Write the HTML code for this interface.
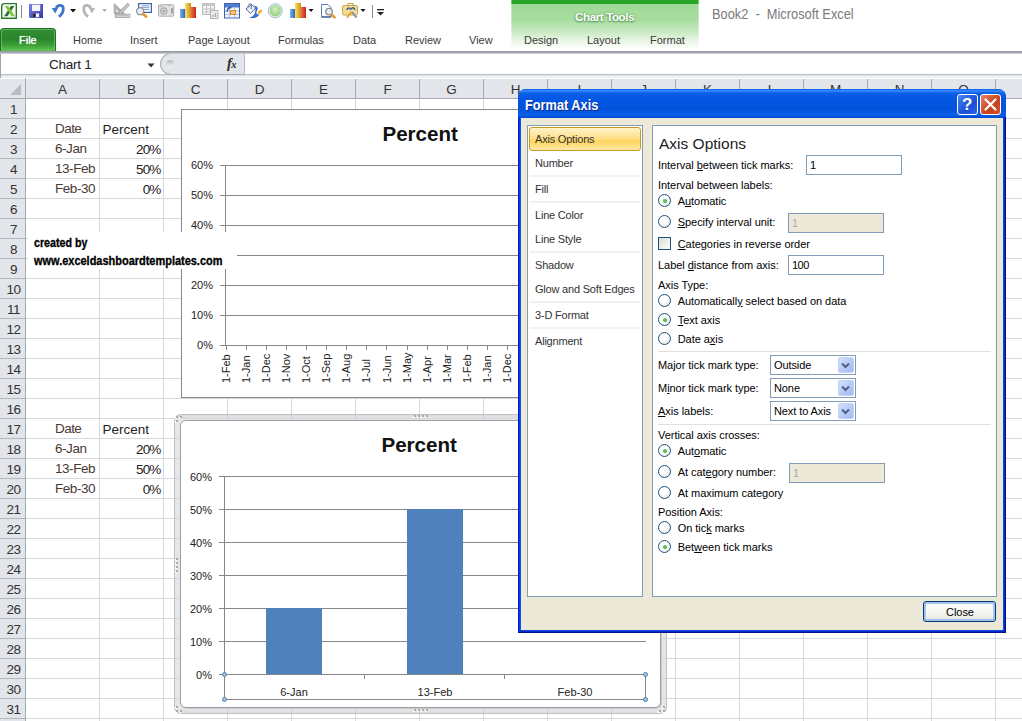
<!DOCTYPE html>
<html><head><meta charset="utf-8"><title>Excel</title>
<style>
*{box-sizing:border-box;margin:0;padding:0}
html,body{width:1022px;height:721px;overflow:hidden;background:#fff}
body{position:relative;font-family:"Liberation Sans",sans-serif;color:#000}
.abs{position:absolute}
.t{position:absolute;white-space:nowrap;line-height:1}
.tab{position:absolute;top:33px;font-size:11px;color:#3b3b3b;white-space:nowrap;line-height:14px}
.ch{position:absolute;top:79px;height:19px;font-size:13.5px;color:#333;text-align:center;line-height:22px}
.rh{position:absolute;left:1px;width:25px;height:20px;font-size:13.5px;color:#333;text-align:center;line-height:21px;letter-spacing:-0.6px}
.cell{position:absolute;font-size:13.5px;color:#222;white-space:nowrap;line-height:22px;height:20px}
.yl{position:absolute;font-size:11px;color:#222;text-align:right;width:30px;line-height:12px;white-space:nowrap}
.xl{position:absolute;font-size:11px;color:#222;white-space:nowrap;line-height:12px;transform-origin:0 0;transform:rotate(-90deg)}
.dl{position:absolute;font-size:11px;color:#000;white-space:nowrap;line-height:13px;letter-spacing:-0.04px}
.li{position:absolute;left:535px;font-size:11px;color:#333;white-space:nowrap;line-height:13px;letter-spacing:-0.2px;margin-top:1px}
.radio{position:absolute;width:13px;height:13px;border-radius:50%;border:1px solid #1c5180;background:radial-gradient(circle at 35% 35%,#fff 40%,#dcdcd4 100%)}
.radio.on::after{content:"";position:absolute;left:3.500px;top:3.500px;width:4px;height:4px;border-radius:50%;background:radial-gradient(circle at 40% 40%,#6fd05f,#1e9a1e)}
.inp{position:absolute;height:20px;border:1px solid #7f9db9;background:#fff;font-size:11px;line-height:19px;padding-left:3px;letter-spacing:-0.5px}
.inp.dis{background:#ece9d8;color:#aca899}
  .sel{position:absolute;height:20px;border:1px solid #7f9db9;background:#fff;font-size:11px;line-height:18px;padding-left:3px;white-space:nowrap;letter-spacing:-0.1px}
.sel i{position:absolute;right:1px;top:1px;width:16px;height:16px;border-radius:2px;background:linear-gradient(135deg,#d4e0fb,#b4c8f6 60%,#a4bbf0);border:1px solid #c2d2f5}
u{text-decoration:underline;text-underline-offset:1px}
</style></head><body>

<div class="abs" style="left:0;top:0;width:1022px;height:51px;background:#fff"></div>
<div class="abs" style="left:511px;top:0;width:188px;height:51px;background:linear-gradient(#27a527 0,#27a527 4px,#9fd996 4px,#a8dda0 20px,#c9eac3 32px,#edf8ea 42px,#fff 50px);box-shadow:inset 1px 0 0 rgba(255,255,255,.35),inset -1px 0 0 rgba(255,255,255,.35)"></div>
<div class="t" style="left:575px;top:12px;font-size:11.5px;color:#fff;font-weight:bold;text-shadow:0 1px 2px #4a8a46,0 0 2px #5a9a56;letter-spacing:-0.35px">Chart Tools</div>
<div class="t" style="left:712px;top:7px;font-size:14px;color:#7a7a7a;transform-origin:0 0;transform:scaleX(0.915)">Book2&nbsp; -&nbsp; Microsoft Excel</div>
<svg class="abs" style="left:0;top:0" width="400" height="28" viewBox="0 0 400 28">
<defs>
<linearGradient id="gb" x1="0" y1="0" x2="1" y2="0"><stop offset="0" stop-color="#7fb2ee"/><stop offset="1" stop-color="#1f5fc0"/></linearGradient>
<linearGradient id="gy" x1="0" y1="0" x2="1" y2="0"><stop offset="0" stop-color="#ffe070"/><stop offset="1" stop-color="#c99400"/></linearGradient>
<linearGradient id="gr" x1="0" y1="0" x2="1" y2="0"><stop offset="0" stop-color="#f4745a"/><stop offset="1" stop-color="#c2250f"/></linearGradient>
<radialGradient id="gg" cx="0.5" cy="0.4" r="0.6"><stop offset="0" stop-color="#d6f0c0"/><stop offset="1" stop-color="#8fd07a"/></radialGradient>
<linearGradient id="gs" x1="0" y1="0" x2="1" y2="1"><stop offset="0" stop-color="#8080ea"/><stop offset="1" stop-color="#3636a4"/></linearGradient>
</defs>
<!-- excel icon -->
<path d="M1.700 18.300V6.200Q1.700 3.600 4.500 3.600H16.300V18.300z" fill="#fff" stroke="#2a7a32" stroke-width="1.400"/>
<rect x="3" y="5" width="12" height="12" fill="#e4f2dc" opacity=".45"/>
<path d="M11 5.900h3.300L7.400 16.200H4.100z" fill="#1f6f3a"/>
<path d="M4.800 5.900h3.300L15 16.200h-3.300z" fill="#86c440"/>
<!-- sep -->
<rect x="21" y="5" width="1" height="13" fill="#8a8a8a"/>
<!-- save -->
<path d="M29 4h14v14h-13l-1-1z" fill="url(#gs)"/>
<rect x="32" y="4.700" width="8.200" height="6.300" fill="#f4f6fc"/>
<rect x="33.100" y="13.400" width="6" height="3.800" fill="#f2f2f6"/>
<rect x="33.100" y="13.400" width="2.600" height="3.800" fill="#1a1a2a"/>
<!-- undo -->
<path d="M56 7.500C58.500 4.200 63.800 4.600 63.300 9.500C63 12.500 61.300 15 58.800 16.600" fill="none" stroke="#3b74cf" stroke-width="2.700"/>
<path d="M51.800 8.200l6.800-1.200l-3.300 6.600z" fill="#3b74cf"/>
<path d="M70 9h6l-3 3.500z" fill="#111"/>
<!-- redo -->
<path d="M91 7.500C88.500 4.200 83.200 4.600 83.700 9.500C84 12.500 85.700 15 88.200 16.600" fill="none" stroke="#b4b6ba" stroke-width="2.700"/>
<path d="M95.200 8.200l-6.800-1.200l3.300 6.600z" fill="#b4b6ba"/>
<path d="M102 9h5l-2.500 3z" fill="#b0b0b0"/>
<!-- ruler triangle -->
<path d="M114.200 3.600V13.400H124.400z" fill="#b4b4b4" stroke="#a2a2a2" stroke-width=".8"/>
<path d="M116 9.300v2.400h2.500z" fill="#fff"/>
<path d="M120.300 12.700L128.800 3.900" stroke="#9c9c9c" stroke-width="3.200"/>
<path d="M120.300 12.700L128.800 3.900" stroke="#cdcdcd" stroke-width="1.600"/>
<rect x="115.200" y="14.200" width="14.600" height="3.200" fill="#d2d2d2" stroke="#a0a0a0" stroke-width=".8"/>
<path d="M117 14.500v1.500M119 14.500v1.500M121 14.500v1.500M123 14.500v1.500M125 14.500v1.500M127 14.500v1.500" stroke="#9a9a9a" stroke-width=".6"/>
<!-- find doc -->
<rect x="138.600" y="3.600" width="12.800" height="8.800" fill="#fff" stroke="#3f64a6" stroke-width="1.200"/>
<path d="M141.500 5.800h8M141.500 7.700h8M143.500 9.600h6" stroke="#7f9cd0" stroke-width="1"/>
<circle cx="140.200" cy="11.200" r="3.500" fill="#e4eefa" stroke="#8a8f98" stroke-width="1.300"/>
<path d="M143.200 14.100l2.800 2.400" stroke="#e39a2c" stroke-width="2.800" stroke-linecap="round"/>
<!-- camera -->
<rect x="158.500" y="4.800" width="15.300" height="11.400" rx="1.200" fill="#e2e2e2" stroke="#b0b0b0"/>
<rect x="159.500" y="5.600" width="3" height="1.400" fill="#bdbdbd"/>
<circle cx="163.800" cy="11" r="3.300" fill="#d2d2d2" stroke="#a2a2a2" stroke-width="1"/>
<circle cx="163.800" cy="11" r="1.300" fill="#ababab"/>
<path d="M168.300 6l1.200-1" stroke="#8a8a8a" stroke-width="1"/>
<rect x="171.200" y="8.200" width="1.600" height="5.200" fill="#8e8e8e"/>
<!-- bar chart -->
<rect x="180" y="9" width="5.500" height="9" fill="url(#gb)"/>
<rect x="185" y="3" width="6" height="15" fill="url(#gy)"/>
<rect x="190.500" y="7" width="5.500" height="11" fill="url(#gr)"/>
<!-- gray table -->
<rect x="202.500" y="3.500" width="12" height="11" fill="#f3f3f3" stroke="#bcbcbc"/>
<rect x="202.500" y="3.500" width="12" height="2.500" fill="#c8c8c8"/>
<path d="M202.500 9h12M202.500 12h12M206.500 6v8.500M210.500 6v8.500" stroke="#c4c4c4" stroke-width="1"/>
<rect x="210.500" y="10.500" width="7.500" height="8" fill="#ededed" stroke="#b4b4b4"/>
<path d="M213 17v-2M215.500 17v-4" stroke="#a8a8a8" stroke-width="1.400"/>
<!-- blue table -->
<rect x="224.500" y="3.500" width="15" height="14.500" fill="#f4f8fd" stroke="#3c62a8"/>
<rect x="225" y="4" width="14" height="3.500" fill="#4f7fd0"/>
<path d="M225 11h14M225 14.500h14M229.500 7.500v10.500M234.500 7.500v10.500" stroke="#a9c0e6" stroke-width="1"/>
<rect x="230.500" y="10.500" width="5" height="4" fill="#f9c48a" stroke="#e08a2a"/>
<path d="M227 12c0-3 2-4.500 4.500-4.500" stroke="#2a54a8" stroke-width="1.300" fill="none"/>
<!-- paint bucket -->
<path d="M254.500 5.800C258 6 258.600 9 256.600 11.500C255.600 13 257 14.500 259.500 14.600C258 17.600 253 19.200 249 17.400C252 17.500 254.300 15.500 254.800 13C255.300 10.500 256 8 254.500 5.800z" fill="#3a6fd0"/>
<path d="M246 8.900L251.400 4.500L255.600 8L250.500 13.600z" fill="#eef3fb" stroke="#3a5a9a" stroke-width="0.900"/>
<path d="M248.100 7C248 4 250 2.800 252.100 4.700" stroke="#4a6aa8" fill="none" stroke-width="0.900"/>
<path d="M251.200 4.500v4.500" stroke="#6a7a95" stroke-width="1.200"/>
<path d="M258.300 13.300L261.700 10.100" stroke="#f0b020" stroke-width="2.400"/>
<!-- green circle -->
<circle cx="275.300" cy="10.800" r="7" fill="#eef2f7" stroke="#a5b8d4" stroke-width="1"/>
<circle cx="275.300" cy="10.800" r="5.700" fill="url(#gg)"/>
<!-- bar chart 2 -->
<rect x="290" y="9" width="5.500" height="9" fill="url(#gb)"/>
<rect x="295" y="3" width="6" height="15" fill="url(#gy)"/>
<rect x="300.500" y="7" width="5.500" height="11" fill="url(#gr)"/>
<path d="M308.500 9h5l-2.500 3z" fill="#111"/>
<!-- print preview -->
<path d="M321.500 4.500h6.500l3 3v9.500h-9.500z" fill="#fff" stroke="#5a7fb8"/>
<path d="M321.500 17h9.500" stroke="#3a5f9a" stroke-width="1.200"/>
<circle cx="329" cy="11.600" r="3.300" fill="#e4edf8" stroke="#8a8f98" stroke-width="1.300"/>
<path d="M331.800 14.800l2.800 2.600" stroke="#e39a2c" stroke-width="2.600" stroke-linecap="round"/>
<!-- toolbox -->
<rect x="342.500" y="5.500" width="15" height="9.500" rx="1.500" fill="#f6dc94" stroke="#c9a54a"/>
<path d="M348 5.500v-2h5v2" fill="none" stroke="#c9a54a" stroke-width="1.200"/>
<path d="M346.800 10c.8-2.600 3-2.600 3.600-.200M351.200 9.600c.8-2.400 3-2.400 3.800.400" stroke="#3d5f9a" stroke-width="1.500" fill="none"/>
<path d="M351.400 12L347 17.800" stroke="#e0a828" stroke-width="1.800"/>
<path d="M351.800 11.800L356.600 17.600" stroke="#8596b3" stroke-width="2"/>
<path d="M360.500 9h5l-2.500 3z" fill="#111"/>
<!-- sep -->
<rect x="372" y="5" width="1" height="13" fill="#8a8a8a"/>
<!-- customize -->
<rect x="377" y="9" width="7" height="1.300" fill="#222"/>
<path d="M377 12h7l-3.500 3.500z" fill="#222"/>
</svg>

<div class="abs" style="left:0;top:28px;width:56px;height:23px;border-radius:4px 4px 0 0;background:linear-gradient(#318f31,#2a842c 45%,#3a9f36 72%,#62c455);box-shadow:inset 1px 1px 0 rgba(140,210,130,.55),inset -1px 0 0 rgba(140,210,130,.55);border:1px solid #1f6e23;border-bottom:none"></div>
<div class="tab" style="left:19px;color:#fff;font-weight:normal;text-shadow:0 0 1px #fff">File</div>
<div class="tab" style="left:73px">Home</div>
<div class="tab" style="left:130px">Insert</div>
<div class="tab" style="left:188px">Page Layout</div>
<div class="tab" style="left:278px">Formulas</div>
<div class="tab" style="left:353px">Data</div>
<div class="tab" style="left:405px">Review</div>
<div class="tab" style="left:469px">View</div>
<div class="tab" style="left:524px">Design</div>
<div class="tab" style="left:587px">Layout</div>
<div class="tab" style="left:650px">Format</div>
<div class="abs" style="left:0;top:54px;width:1022px;height:25px;background:#fff"></div>
<div class="abs" style="left:0;top:74px;width:1022px;height:1px;background:#b9bdc4"></div>
<div class="abs" style="left:0;top:75px;width:1022px;height:3px;background:linear-gradient(#d5d8de,#eef0f8 40%,#eef0f8)"></div>
<div class="abs" style="left:0;top:78px;width:1022px;height:1px;background:#b3b7be"></div>
<div class="abs" style="left:0;top:54px;width:1px;height:25px;background:#a0a4ab"></div>
<div class="t" style="left:49px;top:58px;font-size:13.5px;color:#222;letter-spacing:-0.25px">Chart 1</div>
<svg class="abs" style="left:146.700px;top:62.600px" width="9" height="6"><path d="M0.5 0.5h7l-3.5 4z" fill="#333"/></svg>
<div class="abs" style="left:160px;top:53px;width:85px;height:22px;border-radius:11px 0 0 11px;background:#e2e5ea;border:1px solid #a9adb4;border-right:1px solid #b4b8bf"></div>
<div class="abs" style="left:166px;top:60px;width:8px;height:8px;border-radius:50%;background:linear-gradient(#b4b8be,#dfe2e6 60%,#eceef1)"></div>
<div class="t" style="left:227px;top:56px;font-family:'Liberation Serif',serif;font-style:italic;font-weight:bold;font-size:14.500px;color:#2a2a2a">f<span style="font-size:10.500px;margin-left:-0.500px">x</span></div>
<div class="abs" style="left:0;top:51px;width:1022px;height:3px;background:linear-gradient(#8d9197,#a9adb3 50%,#d5d8dc)"></div>
<div class="abs" style="left:0;top:78px;width:1022px;height:643px;background:#fff"></div>
<div class="abs" style="left:0;top:79px;width:1022px;height:19px;background:#e2e5ea"></div>
<div class="abs" style="left:0;top:98px;width:1022px;height:1px;background:#a5a9b0"></div>
<div class="abs" style="left:0;top:99px;width:25px;height:622px;background:#e2e5ea"></div>
<div class="abs" style="left:25px;top:78px;width:1px;height:643px;background:#a5a9b0"></div>
<svg class="abs" style="left:10px;top:84px" width="12" height="12"><path d="M11 0v11h-11z" fill="#b9bdc2"/></svg>
<div class="ch" style="left:26px;width:73px">A</div>
<div class="abs" style="left:99px;top:79px;width:1px;height:19px;background:#a5a9b0"></div>
<div class="abs" style="left:99px;top:99px;width:1px;height:622px;background:#d6d9dc"></div>
<div class="ch" style="left:100px;width:63px">B</div>
<div class="abs" style="left:163px;top:79px;width:1px;height:19px;background:#a5a9b0"></div>
<div class="abs" style="left:163px;top:99px;width:1px;height:622px;background:#d6d9dc"></div>
<div class="ch" style="left:164px;width:63px">C</div>
<div class="abs" style="left:227px;top:79px;width:1px;height:19px;background:#a5a9b0"></div>
<div class="abs" style="left:227px;top:99px;width:1px;height:622px;background:#d6d9dc"></div>
<div class="ch" style="left:228px;width:63px">D</div>
<div class="abs" style="left:291px;top:79px;width:1px;height:19px;background:#a5a9b0"></div>
<div class="abs" style="left:291px;top:99px;width:1px;height:622px;background:#d6d9dc"></div>
<div class="ch" style="left:292px;width:63px">E</div>
<div class="abs" style="left:355px;top:79px;width:1px;height:19px;background:#a5a9b0"></div>
<div class="abs" style="left:355px;top:99px;width:1px;height:622px;background:#d6d9dc"></div>
<div class="ch" style="left:356px;width:63px">F</div>
<div class="abs" style="left:419px;top:79px;width:1px;height:19px;background:#a5a9b0"></div>
<div class="abs" style="left:419px;top:99px;width:1px;height:622px;background:#d6d9dc"></div>
<div class="ch" style="left:420px;width:63px">G</div>
<div class="abs" style="left:483px;top:79px;width:1px;height:19px;background:#a5a9b0"></div>
<div class="abs" style="left:483px;top:99px;width:1px;height:622px;background:#d6d9dc"></div>
<div class="ch" style="left:484px;width:63px">H</div>
<div class="abs" style="left:547px;top:79px;width:1px;height:19px;background:#a5a9b0"></div>
<div class="abs" style="left:547px;top:99px;width:1px;height:622px;background:#d6d9dc"></div>
<div class="ch" style="left:548px;width:63px">I</div>
<div class="abs" style="left:611px;top:79px;width:1px;height:19px;background:#a5a9b0"></div>
<div class="abs" style="left:611px;top:99px;width:1px;height:622px;background:#d6d9dc"></div>
<div class="ch" style="left:612px;width:63px">J</div>
<div class="abs" style="left:675px;top:79px;width:1px;height:19px;background:#a5a9b0"></div>
<div class="abs" style="left:675px;top:99px;width:1px;height:622px;background:#d6d9dc"></div>
<div class="ch" style="left:676px;width:63px">K</div>
<div class="abs" style="left:739px;top:79px;width:1px;height:19px;background:#a5a9b0"></div>
<div class="abs" style="left:739px;top:99px;width:1px;height:622px;background:#d6d9dc"></div>
<div class="ch" style="left:740px;width:63px">L</div>
<div class="abs" style="left:803px;top:79px;width:1px;height:19px;background:#a5a9b0"></div>
<div class="abs" style="left:803px;top:99px;width:1px;height:622px;background:#d6d9dc"></div>
<div class="ch" style="left:804px;width:63px">M</div>
<div class="abs" style="left:867px;top:79px;width:1px;height:19px;background:#a5a9b0"></div>
<div class="abs" style="left:867px;top:99px;width:1px;height:622px;background:#d6d9dc"></div>
<div class="ch" style="left:868px;width:63px">N</div>
<div class="abs" style="left:931px;top:79px;width:1px;height:19px;background:#a5a9b0"></div>
<div class="abs" style="left:931px;top:99px;width:1px;height:622px;background:#d6d9dc"></div>
<div class="ch" style="left:932px;width:63px">O</div>
<div class="abs" style="left:995px;top:79px;width:1px;height:19px;background:#a5a9b0"></div>
<div class="abs" style="left:995px;top:99px;width:1px;height:622px;background:#d6d9dc"></div>
<div class="ch" style="left:996px;width:64px">P</div>
<div class="rh" style="top:99px">1</div>
<div class="abs" style="left:26px;top:118px;width:996px;height:1px;background:#d6d9dc"></div>
<div class="abs" style="left:0;top:118px;width:25px;height:1px;background:#b4b8be"></div>
<div class="rh" style="top:119px">2</div>
<div class="abs" style="left:26px;top:138px;width:996px;height:1px;background:#d6d9dc"></div>
<div class="abs" style="left:0;top:138px;width:25px;height:1px;background:#b4b8be"></div>
<div class="rh" style="top:139px">3</div>
<div class="abs" style="left:26px;top:158px;width:996px;height:1px;background:#d6d9dc"></div>
<div class="abs" style="left:0;top:158px;width:25px;height:1px;background:#b4b8be"></div>
<div class="rh" style="top:159px">4</div>
<div class="abs" style="left:26px;top:178px;width:996px;height:1px;background:#d6d9dc"></div>
<div class="abs" style="left:0;top:178px;width:25px;height:1px;background:#b4b8be"></div>
<div class="rh" style="top:179px">5</div>
<div class="abs" style="left:26px;top:198px;width:996px;height:1px;background:#d6d9dc"></div>
<div class="abs" style="left:0;top:198px;width:25px;height:1px;background:#b4b8be"></div>
<div class="rh" style="top:199px">6</div>
<div class="abs" style="left:26px;top:218px;width:996px;height:1px;background:#d6d9dc"></div>
<div class="abs" style="left:0;top:218px;width:25px;height:1px;background:#b4b8be"></div>
<div class="rh" style="top:219px">7</div>
<div class="abs" style="left:26px;top:238px;width:996px;height:1px;background:#d6d9dc"></div>
<div class="abs" style="left:0;top:238px;width:25px;height:1px;background:#b4b8be"></div>
<div class="rh" style="top:239px">8</div>
<div class="abs" style="left:26px;top:258px;width:996px;height:1px;background:#d6d9dc"></div>
<div class="abs" style="left:0;top:258px;width:25px;height:1px;background:#b4b8be"></div>
<div class="rh" style="top:259px">9</div>
<div class="abs" style="left:26px;top:278px;width:996px;height:1px;background:#d6d9dc"></div>
<div class="abs" style="left:0;top:278px;width:25px;height:1px;background:#b4b8be"></div>
<div class="rh" style="top:279px">10</div>
<div class="abs" style="left:26px;top:298px;width:996px;height:1px;background:#d6d9dc"></div>
<div class="abs" style="left:0;top:298px;width:25px;height:1px;background:#b4b8be"></div>
<div class="rh" style="top:299px">11</div>
<div class="abs" style="left:26px;top:318px;width:996px;height:1px;background:#d6d9dc"></div>
<div class="abs" style="left:0;top:318px;width:25px;height:1px;background:#b4b8be"></div>
<div class="rh" style="top:319px">12</div>
<div class="abs" style="left:26px;top:338px;width:996px;height:1px;background:#d6d9dc"></div>
<div class="abs" style="left:0;top:338px;width:25px;height:1px;background:#b4b8be"></div>
<div class="rh" style="top:339px">13</div>
<div class="abs" style="left:26px;top:358px;width:996px;height:1px;background:#d6d9dc"></div>
<div class="abs" style="left:0;top:358px;width:25px;height:1px;background:#b4b8be"></div>
<div class="rh" style="top:359px">14</div>
<div class="abs" style="left:26px;top:378px;width:996px;height:1px;background:#d6d9dc"></div>
<div class="abs" style="left:0;top:378px;width:25px;height:1px;background:#b4b8be"></div>
<div class="rh" style="top:379px">15</div>
<div class="abs" style="left:26px;top:398px;width:996px;height:1px;background:#d6d9dc"></div>
<div class="abs" style="left:0;top:398px;width:25px;height:1px;background:#b4b8be"></div>
<div class="rh" style="top:399px">16</div>
<div class="abs" style="left:26px;top:418px;width:996px;height:1px;background:#d6d9dc"></div>
<div class="abs" style="left:0;top:418px;width:25px;height:1px;background:#b4b8be"></div>
<div class="rh" style="top:419px">17</div>
<div class="abs" style="left:26px;top:438px;width:996px;height:1px;background:#d6d9dc"></div>
<div class="abs" style="left:0;top:438px;width:25px;height:1px;background:#b4b8be"></div>
<div class="rh" style="top:439px">18</div>
<div class="abs" style="left:26px;top:458px;width:996px;height:1px;background:#d6d9dc"></div>
<div class="abs" style="left:0;top:458px;width:25px;height:1px;background:#b4b8be"></div>
<div class="rh" style="top:459px">19</div>
<div class="abs" style="left:26px;top:478px;width:996px;height:1px;background:#d6d9dc"></div>
<div class="abs" style="left:0;top:478px;width:25px;height:1px;background:#b4b8be"></div>
<div class="rh" style="top:479px">20</div>
<div class="abs" style="left:26px;top:498px;width:996px;height:1px;background:#d6d9dc"></div>
<div class="abs" style="left:0;top:498px;width:25px;height:1px;background:#b4b8be"></div>
<div class="rh" style="top:499px">21</div>
<div class="abs" style="left:26px;top:518px;width:996px;height:1px;background:#d6d9dc"></div>
<div class="abs" style="left:0;top:518px;width:25px;height:1px;background:#b4b8be"></div>
<div class="rh" style="top:519px">22</div>
<div class="abs" style="left:26px;top:538px;width:996px;height:1px;background:#d6d9dc"></div>
<div class="abs" style="left:0;top:538px;width:25px;height:1px;background:#b4b8be"></div>
<div class="rh" style="top:539px">23</div>
<div class="abs" style="left:26px;top:558px;width:996px;height:1px;background:#d6d9dc"></div>
<div class="abs" style="left:0;top:558px;width:25px;height:1px;background:#b4b8be"></div>
<div class="rh" style="top:559px">24</div>
<div class="abs" style="left:26px;top:578px;width:996px;height:1px;background:#d6d9dc"></div>
<div class="abs" style="left:0;top:578px;width:25px;height:1px;background:#b4b8be"></div>
<div class="rh" style="top:579px">25</div>
<div class="abs" style="left:26px;top:598px;width:996px;height:1px;background:#d6d9dc"></div>
<div class="abs" style="left:0;top:598px;width:25px;height:1px;background:#b4b8be"></div>
<div class="rh" style="top:599px">26</div>
<div class="abs" style="left:26px;top:618px;width:996px;height:1px;background:#d6d9dc"></div>
<div class="abs" style="left:0;top:618px;width:25px;height:1px;background:#b4b8be"></div>
<div class="rh" style="top:619px">27</div>
<div class="abs" style="left:26px;top:638px;width:996px;height:1px;background:#d6d9dc"></div>
<div class="abs" style="left:0;top:638px;width:25px;height:1px;background:#b4b8be"></div>
<div class="rh" style="top:639px">28</div>
<div class="abs" style="left:26px;top:658px;width:996px;height:1px;background:#d6d9dc"></div>
<div class="abs" style="left:0;top:658px;width:25px;height:1px;background:#b4b8be"></div>
<div class="rh" style="top:659px">29</div>
<div class="abs" style="left:26px;top:678px;width:996px;height:1px;background:#d6d9dc"></div>
<div class="abs" style="left:0;top:678px;width:25px;height:1px;background:#b4b8be"></div>
<div class="rh" style="top:679px">30</div>
<div class="abs" style="left:26px;top:698px;width:996px;height:1px;background:#d6d9dc"></div>
<div class="abs" style="left:0;top:698px;width:25px;height:1px;background:#b4b8be"></div>
<div class="rh" style="top:699px">31</div>
<div class="abs" style="left:26px;top:718px;width:996px;height:1px;background:#d6d9dc"></div>
<div class="abs" style="left:0;top:718px;width:25px;height:1px;background:#b4b8be"></div>
<div class="rh" style="top:719px">32</div>
<div class="cell" style="left:55px;top:119px;color:#4a3a33;letter-spacing:-0.55px;line-height:20.500px">Date</div>
<div class="cell" style="left:102.5px;top:119px">Percent</div>
<div class="cell" style="left:55px;top:139px;color:#4a3a33;letter-spacing:-0.45px;line-height:20.500px">6-Jan</div>
<div class="cell" style="left:100px;width:60.5px;text-align:right;top:139px;letter-spacing:-0.85px;line-height:21px">20%</div>
<div class="cell" style="left:55px;top:159px;color:#4a3a33;letter-spacing:-0.45px;line-height:20.500px">13-Feb</div>
<div class="cell" style="left:100px;width:60.5px;text-align:right;top:159px;letter-spacing:-0.85px;line-height:21px">50%</div>
<div class="cell" style="left:55px;top:179px;color:#4a3a33;letter-spacing:-0.45px;line-height:20.500px">Feb-30</div>
<div class="cell" style="left:100px;width:60.5px;text-align:right;top:179px;letter-spacing:-0.85px;line-height:21px">0%</div>
<div class="cell" style="left:55px;top:419px;color:#4a3a33;letter-spacing:-0.55px;line-height:20.500px">Date</div>
<div class="cell" style="left:102.5px;top:419px">Percent</div>
<div class="cell" style="left:55px;top:439px;color:#4a3a33;letter-spacing:-0.45px;line-height:20.500px">6-Jan</div>
<div class="cell" style="left:100px;width:60.5px;text-align:right;top:439px;letter-spacing:-0.85px;line-height:21px">20%</div>
<div class="cell" style="left:55px;top:459px;color:#4a3a33;letter-spacing:-0.45px;line-height:20.500px">13-Feb</div>
<div class="cell" style="left:100px;width:60.5px;text-align:right;top:459px;letter-spacing:-0.85px;line-height:21px">50%</div>
<div class="cell" style="left:55px;top:479px;color:#4a3a33;letter-spacing:-0.45px;line-height:20.500px">Feb-30</div>
<div class="cell" style="left:100px;width:60.5px;text-align:right;top:479px;letter-spacing:-0.85px;line-height:21px">0%</div>
<div class="abs" style="left:181px;top:109px;width:420px;height:289px;background:#fff;border:1px solid #8a8a8a"></div>
<div class="t" style="left:382.4px;top:124.4px;font-size:20.6px;font-weight:bold;color:#111">Percent</div>
<div class="abs" style="left:220px;top:165px;width:400px;height:1px;background:#868686"></div>
<div class="yl" style="left:183px;top:159px">60%</div>
<div class="abs" style="left:220px;top:195px;width:400px;height:1px;background:#868686"></div>
<div class="yl" style="left:183px;top:189px">50%</div>
<div class="abs" style="left:220px;top:225px;width:400px;height:1px;background:#868686"></div>
<div class="yl" style="left:183px;top:219px">40%</div>
<div class="abs" style="left:220px;top:255px;width:400px;height:1px;background:#868686"></div>
<div class="yl" style="left:183px;top:249px">30%</div>
<div class="abs" style="left:220px;top:285px;width:400px;height:1px;background:#868686"></div>
<div class="yl" style="left:183px;top:279px">20%</div>
<div class="abs" style="left:220px;top:315px;width:400px;height:1px;background:#868686"></div>
<div class="yl" style="left:183px;top:309px">10%</div>
<div class="abs" style="left:220px;top:345px;width:400px;height:1px;background:#868686"></div>
<div class="yl" style="left:183px;top:339px">0%</div>
<div class="abs" style="left:225px;top:165px;width:1px;height:181px;background:#868686"></div>
<div class="abs" style="left:226px;top:345px;width:1px;height:5px;background:#868686"></div>
<div class="xl" style="left:219.5px;top:383px">1-Feb</div>
<div class="abs" style="left:246px;top:345px;width:1px;height:5px;background:#868686"></div>
<div class="xl" style="left:239.6px;top:383px">1-Jan</div>
<div class="abs" style="left:266px;top:345px;width:1px;height:5px;background:#868686"></div>
<div class="xl" style="left:259.7px;top:383px">1-Dec</div>
<div class="abs" style="left:286px;top:345px;width:1px;height:5px;background:#868686"></div>
<div class="xl" style="left:279.9px;top:383px">1-Nov</div>
<div class="abs" style="left:306px;top:345px;width:1px;height:5px;background:#868686"></div>
<div class="xl" style="left:300.0px;top:383px">1-Oct</div>
<div class="abs" style="left:326px;top:345px;width:1px;height:5px;background:#868686"></div>
<div class="xl" style="left:320.1px;top:383px">1-Sep</div>
<div class="abs" style="left:346px;top:345px;width:1px;height:5px;background:#868686"></div>
<div class="xl" style="left:340.2px;top:383px">1-Aug</div>
<div class="abs" style="left:366px;top:345px;width:1px;height:5px;background:#868686"></div>
<div class="xl" style="left:360.3px;top:383px">1-Jul</div>
<div class="abs" style="left:386px;top:345px;width:1px;height:5px;background:#868686"></div>
<div class="xl" style="left:380.5px;top:383px">1-Jun</div>
<div class="abs" style="left:407px;top:345px;width:1px;height:5px;background:#868686"></div>
<div class="xl" style="left:400.6px;top:383px">1-May</div>
<div class="abs" style="left:427px;top:345px;width:1px;height:5px;background:#868686"></div>
<div class="xl" style="left:420.7px;top:383px">1-Apr</div>
<div class="abs" style="left:447px;top:345px;width:1px;height:5px;background:#868686"></div>
<div class="xl" style="left:440.8px;top:383px">1-Mar</div>
<div class="abs" style="left:467px;top:345px;width:1px;height:5px;background:#868686"></div>
<div class="xl" style="left:460.9px;top:383px">1-Feb</div>
<div class="abs" style="left:487px;top:345px;width:1px;height:5px;background:#868686"></div>
<div class="xl" style="left:481.1px;top:383px">1-Jan</div>
<div class="abs" style="left:507px;top:345px;width:1px;height:5px;background:#868686"></div>
<div class="xl" style="left:501.2px;top:383px">1-Dec</div>
<div class="abs" style="left:28px;top:232px;width:209px;height:37px;background:#fff"></div>
<div class="t" style="left:33.6px;top:236px;font-size:13.5px;font-weight:bold;color:#000;-webkit-text-stroke:0.35px #000;transform-origin:0 0;transform:scaleX(0.79)">created by</div>
<div class="t" style="left:33.6px;top:254px;font-size:13.5px;font-weight:bold;color:#000;-webkit-text-stroke:0.35px #000;transform-origin:0 0;transform:scaleX(0.812)">www.exceldashboardtemplates.com</div>
<div class="abs" style="left:174px;top:414px;width:493px;height:300px;border-radius:7px;background:linear-gradient(rgba(195,197,201,.6),rgba(212,213,216,.6) 4px,rgba(212,213,216,.6) 295px,rgba(195,197,201,.6));border:1px solid rgba(185,188,193,.85)"></div>
<div class="abs" style="left:180px;top:420px;width:481px;height:288px;border-radius:6px;background:#fff;border:1px solid #9c9fa3;box-shadow:1px 1px 0 #c9cbce"></div>
<div class="t" style="left:381.4px;top:435.4px;font-size:20.6px;font-weight:bold;color:#111">Percent</div>
<div class="abs" style="left:219px;top:476px;width:427px;height:1px;background:#868686"></div>
<div class="yl" style="left:182px;top:471px">60%</div>
<div class="abs" style="left:219px;top:509px;width:427px;height:1px;background:#868686"></div>
<div class="yl" style="left:182px;top:504px">50%</div>
<div class="abs" style="left:219px;top:542px;width:427px;height:1px;background:#868686"></div>
<div class="yl" style="left:182px;top:537px">40%</div>
<div class="abs" style="left:219px;top:575px;width:427px;height:1px;background:#868686"></div>
<div class="yl" style="left:182px;top:570px">30%</div>
<div class="abs" style="left:219px;top:608px;width:427px;height:1px;background:#868686"></div>
<div class="yl" style="left:182px;top:603px">20%</div>
<div class="abs" style="left:219px;top:641px;width:427px;height:1px;background:#868686"></div>
<div class="yl" style="left:182px;top:636px">10%</div>
<div class="abs" style="left:219px;top:674px;width:427px;height:1px;background:#868686"></div>
<div class="yl" style="left:182px;top:669px">0%</div>
<div class="abs" style="left:224px;top:476px;width:1px;height:199px;background:#868686"></div>
<div class="abs" style="left:266px;top:608px;width:56px;height:66px;background:#4f81bd"></div>
<div class="abs" style="left:407px;top:509px;width:56px;height:165px;background:#4f81bd"></div>
<div class="abs" style="left:224px;top:674px;width:1px;height:5px;background:#868686"></div>
<div class="abs" style="left:364px;top:674px;width:1px;height:5px;background:#868686"></div>
<div class="abs" style="left:504px;top:674px;width:1px;height:5px;background:#868686"></div>
<div class="abs" style="left:645px;top:674px;width:1px;height:5px;background:#868686"></div>
<div class="yl" style="left:254px;width:80px;text-align:center;top:686px">6-Jan</div>
<div class="yl" style="left:395px;width:80px;text-align:center;top:686px">13-Feb</div>
<div class="yl" style="left:535px;width:80px;text-align:center;top:686px">Feb-30</div>
<div class="abs" style="left:414px;top:415px;width:2px;height:2px;background:#aaa;box-shadow:-1px 1px 0 #fff"></div>
<div class="abs" style="left:414px;top:709px;width:2px;height:2px;background:#aaa;box-shadow:-1px 1px 0 #fff"></div>
<div class="abs" style="left:418px;top:415px;width:2px;height:2px;background:#aaa;box-shadow:-1px 1px 0 #fff"></div>
<div class="abs" style="left:418px;top:709px;width:2px;height:2px;background:#aaa;box-shadow:-1px 1px 0 #fff"></div>
<div class="abs" style="left:422px;top:415px;width:2px;height:2px;background:#aaa;box-shadow:-1px 1px 0 #fff"></div>
<div class="abs" style="left:422px;top:709px;width:2px;height:2px;background:#aaa;box-shadow:-1px 1px 0 #fff"></div>
<div class="abs" style="left:426px;top:415px;width:2px;height:2px;background:#aaa;box-shadow:-1px 1px 0 #fff"></div>
<div class="abs" style="left:426px;top:709px;width:2px;height:2px;background:#aaa;box-shadow:-1px 1px 0 #fff"></div>
<div class="abs" style="left:176px;top:558px;width:2px;height:2px;background:#aaa;box-shadow:-1px 1px 0 #fff"></div>
<div class="abs" style="left:663px;top:558px;width:2px;height:2px;background:#aaa;box-shadow:-1px 1px 0 #fff"></div>
<div class="abs" style="left:176px;top:562px;width:2px;height:2px;background:#aaa;box-shadow:-1px 1px 0 #fff"></div>
<div class="abs" style="left:663px;top:562px;width:2px;height:2px;background:#aaa;box-shadow:-1px 1px 0 #fff"></div>
<div class="abs" style="left:176px;top:566px;width:2px;height:2px;background:#aaa;box-shadow:-1px 1px 0 #fff"></div>
<div class="abs" style="left:663px;top:566px;width:2px;height:2px;background:#aaa;box-shadow:-1px 1px 0 #fff"></div>
<div class="abs" style="left:176px;top:570px;width:2px;height:2px;background:#aaa;box-shadow:-1px 1px 0 #fff"></div>
<div class="abs" style="left:663px;top:570px;width:2px;height:2px;background:#aaa;box-shadow:-1px 1px 0 #fff"></div>
<div class="abs" style="left:176px;top:416px;width:2px;height:2px;background:#aaa;box-shadow:-1px 1px 0 #fff"></div>
<div class="abs" style="left:180px;top:416px;width:2px;height:2px;background:#aaa;box-shadow:-1px 1px 0 #fff"></div>
<div class="abs" style="left:176px;top:420px;width:2px;height:2px;background:#aaa;box-shadow:-1px 1px 0 #fff"></div>
<div class="abs" style="left:663px;top:416px;width:2px;height:2px;background:#aaa;box-shadow:-1px 1px 0 #fff"></div>
<div class="abs" style="left:659px;top:416px;width:2px;height:2px;background:#aaa;box-shadow:-1px 1px 0 #fff"></div>
<div class="abs" style="left:663px;top:420px;width:2px;height:2px;background:#aaa;box-shadow:-1px 1px 0 #fff"></div>
<div class="abs" style="left:176px;top:710px;width:2px;height:2px;background:#aaa;box-shadow:-1px 1px 0 #fff"></div>
<div class="abs" style="left:180px;top:710px;width:2px;height:2px;background:#aaa;box-shadow:-1px 1px 0 #fff"></div>
<div class="abs" style="left:176px;top:706px;width:2px;height:2px;background:#aaa;box-shadow:-1px 1px 0 #fff"></div>
<div class="abs" style="left:663px;top:710px;width:2px;height:2px;background:#aaa;box-shadow:-1px 1px 0 #fff"></div>
<div class="abs" style="left:659px;top:710px;width:2px;height:2px;background:#aaa;box-shadow:-1px 1px 0 #fff"></div>
<div class="abs" style="left:663px;top:706px;width:2px;height:2px;background:#aaa;box-shadow:-1px 1px 0 #fff"></div>
<div class="abs" style="left:224px;top:674px;width:422px;height:26px;border:1px solid #868686"></div>
<div class="abs" style="left:222px;top:672px;width:5px;height:5px;border-radius:50%;border:1px solid #4f7fae;background:#a9c4de"></div>
<div class="abs" style="left:643px;top:672px;width:5px;height:5px;border-radius:50%;border:1px solid #4f7fae;background:#a9c4de"></div>
<div class="abs" style="left:222px;top:697px;width:5px;height:5px;border-radius:50%;border:1px solid #4f7fae;background:#a9c4de"></div>
<div class="abs" style="left:643px;top:697px;width:5px;height:5px;border-radius:50%;border:1px solid #4f7fae;background:#a9c4de"></div>
<div class="abs" style="left:518px;top:89px;width:488px;height:544px;background:#0831d9;border-radius:8px 8px 0 0"></div>
<div class="abs" style="left:518px;top:89px;width:488px;height:29px;border-radius:8px 8px 0 0;background:linear-gradient(#0058ee 0,#3a8cfb 6%,#0a5fe6 14%,#0356e1 40%,#0253dc 70%,#0a5fe9 90%,#0048cf 100%)"></div>
<div class="abs" style="left:521px;top:118px;width:482px;height:512px;background:#ece9d8"></div>
<div class="t" style="left:525px;top:99px;font-size:13.800px;font-weight:bold;color:#fff;text-shadow:1px 1px 0 #0a2a8a;transform-origin:0 0;transform:scaleX(0.925)">Format Axis</div>
<div class="abs" style="left:1003px;top:117px;width:1px;height:516px;background:#0c47e0"></div>
<div class="abs" style="left:1004px;top:117px;width:1px;height:516px;background:#0528c8"></div>
<div class="abs" style="left:1005px;top:117px;width:1px;height:516px;background:#00138c"></div>
<div class="abs" style="left:518px;top:630px;width:486px;height:1px;background:#0c47e0"></div>
<div class="abs" style="left:518px;top:631px;width:487px;height:1px;background:#0528c8"></div>
<div class="abs" style="left:518px;top:632px;width:488px;height:1px;background:#00138c"></div>
<div class="abs" style="left:518px;top:117px;width:1px;height:515px;background:#0019cf"></div>
<div class="abs" style="left:519px;top:117px;width:1px;height:514px;background:#0a3ae0"></div>
<div class="abs" style="left:520px;top:117px;width:1px;height:513px;background:#1150ea"></div>
<div class="abs" style="left:957px;top:94px;width:21px;height:21px;border-radius:3px;border:1px solid #fff;background:linear-gradient(135deg,#4a86f5,#1c4fd8 60%,#2a61e6)"></div>
<div class="t" style="left:962px;top:96px;font-size:17px;font-weight:bold;color:#fff">?</div>
<div class="abs" style="left:980px;top:94px;width:21px;height:21px;border-radius:3px;border:1px solid #fff;background:linear-gradient(135deg,#e8805f,#c9401c 60%,#d9532c)"></div>
<svg class="abs" style="left:980px;top:94px" width="21" height="21"><path d="M5.5 5.5l10 10M15.5 5.5l-10 10" stroke="#fff" stroke-width="2.2" stroke-linecap="round"/></svg>
<div class="abs" style="left:527px;top:125px;width:116px;height:472px;background:#fff;border:1px solid #7f9db9"></div>
<div class="abs" style="left:529px;top:127px;width:112px;height:24px;border-radius:3px;border:1px solid #c29b29;background:linear-gradient(#fff3c9,#ffe08c 45%,#ffd45e 60%,#ffe9a6)"></div>
<div class="li" style="top:132px">Axis Options</div>
<div class="li" style="top:156px">Number</div>
<div class="li" style="top:182px">Fill</div>
<div class="li" style="top:208px">Line Color</div>
<div class="li" style="top:232px">Line Style</div>
<div class="li" style="top:258px">Shadow</div>
<div class="li" style="top:282px">Glow and Soft Edges</div>
<div class="li" style="top:308px">3-D Format</div>
<div class="li" style="top:334px">Alignment</div>
<div class="abs" style="left:530px;top:175px;width:110px;height:2px;background:#eef1f5"></div>
<div class="abs" style="left:530px;top:201px;width:110px;height:2px;background:#eef1f5"></div>
<div class="abs" style="left:530px;top:251px;width:110px;height:2px;background:#eef1f5"></div>
<div class="abs" style="left:530px;top:301px;width:110px;height:2px;background:#eef1f5"></div>
<div class="abs" style="left:530px;top:327px;width:110px;height:2px;background:#eef1f5"></div>
<div class="abs" style="left:652px;top:125px;width:345px;height:472px;background:#fff;border:1px solid #7f9db9"></div>
<div class="t" style="left:659px;top:136px;font-size:15.5px;color:#222">Axis Options</div>
<div class="dl" style="left:658px;top:159px">Interval <u>b</u>etween tick marks:</div>
<div class="inp" style="left:806px;top:155px;width:96px">1</div>
<div class="dl" style="left:658px;top:179px">Interval between labels:</div>
<div class="radio on" style="left:658px;top:194px"></div>
<div class="dl" style="left:677.7px;top:195px">A<u>u</u>tomatic</div>
<div class="radio" style="left:658px;top:215px"></div>
<div class="dl" style="left:677.7px;top:216px"><u>S</u>pecify interval unit:</div>
<div class="inp dis" style="left:788px;top:213px;width:96px">1</div>
<div class="abs" style="left:658px;top:237px;width:13px;height:13px;border:1px solid #1c5180;background:linear-gradient(135deg,#dcdcd4,#fff)"></div>
<div class="dl" style="left:677.7px;top:238px"><u>C</u>ategories in reverse order</div>
<div class="dl" style="left:658px;top:259px">Label <u>d</u>istance from axis:</div>
<div class="inp" style="left:788px;top:255px;width:96px">100</div>
<div class="dl" style="left:658px;top:279px">Axis Type:</div>
<div class="radio" style="left:658px;top:294px"></div>
<div class="dl" style="left:677.7px;top:295px">Automaticall<u>y</u> select based on data</div>
<div class="radio on" style="left:658px;top:313px"></div>
<div class="dl" style="left:677.7px;top:314px"><u>T</u>ext axis</div>
<div class="radio" style="left:658px;top:332px"></div>
<div class="dl" style="left:677.7px;top:333px">Date a<u>x</u>is</div>
<div class="abs" style="left:658px;top:351px;width:333px;height:1px;background:#e0e0e0"></div>
<div class="dl" style="left:658px;top:359px">Ma<u>j</u>or tick mark type:</div>
<div class="dl" style="left:658px;top:382px">M<u>i</u>nor tick mark type:</div>
<div class="dl" style="left:658px;top:405px"><u>A</u>xis labels:</div>
<div class="sel" style="left:770px;top:355px;width:86px">Outside<i></i></div>
<svg class="abs" style="left:841px;top:361.5px" width="9" height="7"><path d="M1 1.5l3.5 3.5l3.5-3.5" stroke="#4d6185" stroke-width="2" fill="none"/></svg>
<div class="sel" style="left:770px;top:378px;width:86px">None<i></i></div>
<svg class="abs" style="left:841px;top:384.5px" width="9" height="7"><path d="M1 1.5l3.5 3.5l3.5-3.5" stroke="#4d6185" stroke-width="2" fill="none"/></svg>
<div class="sel" style="left:770px;top:401px;width:86px">Next to Axis<i></i></div>
<svg class="abs" style="left:841px;top:407.5px" width="9" height="7"><path d="M1 1.5l3.5 3.5l3.5-3.5" stroke="#4d6185" stroke-width="2" fill="none"/></svg>
<div class="abs" style="left:658px;top:424px;width:333px;height:1px;background:#e0e0e0"></div>
<div class="dl" style="left:658px;top:429px">Vertical axis crosses:</div>
<div class="radio on" style="left:658px;top:444px"></div>
<div class="dl" style="left:677.7px;top:445px">Aut<u>o</u>matic</div>
<div class="radio" style="left:658px;top:465px"></div>
<div class="dl" style="left:677.7px;top:466px">At cat<u>e</u>gory number:</div>
<div class="inp dis" style="left:789px;top:463px;width:96px">1</div>
<div class="radio" style="left:658px;top:486px"></div>
<div class="dl" style="left:677.7px;top:487px">At maximum cate<u>g</u>ory</div>
<div class="dl" style="left:658px;top:506px">Position Axis:</div>
<div class="radio" style="left:658px;top:521px"></div>
<div class="dl" style="left:677.7px;top:522px">On tic<u>k</u> marks</div>
<div class="radio on" style="left:658px;top:540px"></div>
<div class="dl" style="left:677.7px;top:541px">Bet<u>w</u>een tick marks</div>
<div class="abs" style="left:923px;top:601px;width:73px;height:21px;border-radius:3px;border:1px solid #003c74;background:linear-gradient(#fff,#f0f0ea 80%,#d6d0c5);box-shadow:inset 0 0 0 2px #a8c3f3"></div>
<div class="dl" style="left:946px;top:606px">Close</div>
</body></html>
